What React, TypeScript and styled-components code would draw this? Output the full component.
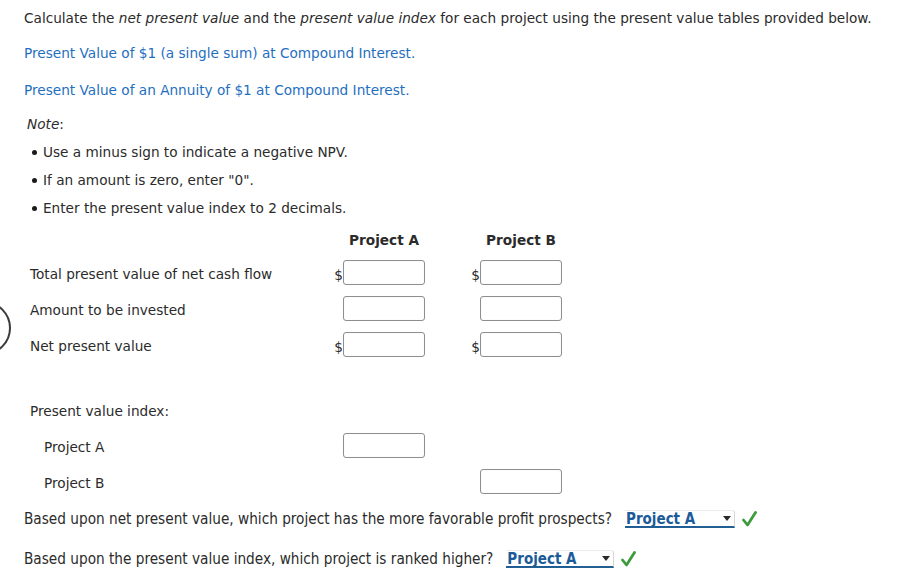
import React from "react";
import styled, { createGlobalStyle } from "styled-components";

const Global = createGlobalStyle`
  html, body { margin: 0; padding: 0; background: #fff; }
  body { font-family: Verdana, "DejaVu Sans", sans-serif; font-size: 13.65px; color: #2b2b2b; }
`;

const Page = styled.div`
  position: relative;
  width: 907px;
  height: 584px;
  overflow: hidden;
  padding: 8px 0 0 24px;
  box-sizing: border-box;
`;

const Para = styled.p<{ $mt?: number; $indent?: number }>`
  margin: ${(p) => p.$mt ?? 0}px 0 0 ${(p) => p.$indent ?? 0}px;
  line-height: 20px;
  white-space: nowrap;
`;

const LinkText = styled.a`
  color: #1f6fbf;
  text-decoration: none;
  cursor: pointer;
`;

const Bullets = styled.ul`
  margin: 8px 0 0 0;
  padding: 0 0 0 19px;
  list-style: none;
  display: flex;
  flex-direction: column;
  gap: 8px;
`;

const Bullet = styled.li`
  position: relative;
  line-height: 20px;
  &::before {
    content: "";
    position: absolute;
    left: -11px;
    top: 8px;
    width: 5px;
    height: 5px;
    border-radius: 50%;
    background: #1a1a1a;
  }
`;

const Table = styled.div`
  display: grid;
  grid-template-columns: 303px 137px 92px;
  row-gap: 11px;
  margin: 12px 0 0 6px;
  align-items: center;
`;

const HeadCell = styled.div`
  font-weight: bold;
  line-height: 20px;
  padding-left: 10px;
  width: 82px;
  text-align: center;
  margin-bottom: -1px;
`;

const Label = styled.div<{ $indent?: number }>`
  line-height: 20px;
  padding-left: ${(p) => p.$indent ?? 0}px;
  white-space: nowrap;
  margin-top: 2px;
`;

const Cell = styled.div`
  display: flex;
  align-items: center;
  height: 25px;
`;

const Dollar = styled.span<{ $show?: boolean }>`
  width: 10px;
  text-align: right;
  padding-right: 0px;
  box-sizing: border-box;
  visibility: ${(p) => (p.$show ? "visible" : "hidden")};
  line-height: 20px;
  margin-top: 4px;
`;

const Input = styled.input`
  width: 82px;
  height: 25px;
  box-sizing: border-box;
  border: 1px solid #8e8e8e;
  border-radius: 3px;
  box-shadow: inset 0 0 1px rgba(0, 0, 0, 0.15);
  background: #fff;
  padding: 0 4px;
  font: inherit;
  outline: none;
`;

const Section = styled.div`
  margin: 44px 0 0 6px;
  line-height: 20px;
`;

const Table2 = styled(Table)`
  margin-top: 12px;
`;

const Question = styled.div<{ $mt: number }>`
  margin-top: ${(p) => p.$mt}px;
  display: flex;
  align-items: center;
  font-family: "DejaVu Sans Condensed", "DejaVu Sans", sans-serif;
  font-stretch: condensed;
  font-size: 15.2px;
  line-height: 20px;
  white-space: nowrap;
`;

const SelectBox = styled.div<{ $w: number }>`
  position: relative;
  margin-left: 13px;
  width: ${(p) => p.$w}px;
  height: 18px;
  box-sizing: border-box;
  border-bottom: 2px solid #225f92;
  border-right: 1px solid #d6d6d6;
  border-top: 1px solid #ececec;
  border-radius: 0 3px 0 0;
  font-weight: bold;
  color: #1c5b97;
  font-size: 15px;
  line-height: 16px;
  padding-left: 1px;
  text-decoration: underline;
  text-decoration-thickness: 1px;
  text-underline-offset: 2px;
`;

const Caret = styled.span`
  position: absolute;
  right: 3px;
  top: 5px;
  width: 0;
  height: 0;
  border-left: 4px solid transparent;
  border-right: 4px solid transparent;
  border-top: 5px solid #2a2a2a;
`;

const Check = styled.svg`
  margin-left: 7px;
  width: 15px;
  height: 16px;
`;

const SideArc = styled.div`
  position: absolute;
  left: -43px;
  top: 301px;
  width: 50px;
  height: 50px;
  border: 2px solid #3a3a3a;
  border-radius: 50%;
`;

function CheckMark() {
  return (
    <Check viewBox="0 0 15 16">
      <path d="M1.5 9 L5.5 14 L13.5 1.5" stroke="#3d9b3d" strokeWidth="2.8" fill="none" strokeLinecap="round" strokeLinejoin="round" />
    </Check>
  );
}

function Select({ value, width }: { value: string; width: number }) {
  return (
    <SelectBox $w={width}>
      {value}
      <Caret />
    </SelectBox>
  );
}

const rows = [
  { label: "Total present value of net cash flow", dollar: true },
  { label: "Amount to be invested", dollar: false },
  { label: "Net present value", dollar: true },
];

export default function App() {
  return (
    <>
      <Global />
      <Page>
        <SideArc />
        <Para>
          Calculate the <i>net present value</i> and the <i>present value index</i> for each project using the present value tables provided below.
        </Para>
        <Para $mt={15}>
          <LinkText>Present Value of $1 (a single sum) at Compound Interest.</LinkText>
        </Para>
        <Para $mt={17}>
          <LinkText>Present Value of an Annuity of $1 at Compound Interest.</LinkText>
        </Para>
        <Para $mt={14} $indent={3}>
          <i>Note</i>:
        </Para>
        <Bullets>
          <Bullet>Use a minus sign to indicate a negative NPV.</Bullet>
          <Bullet>If an amount is zero, enter "0".</Bullet>
          <Bullet>Enter the present value index to 2 decimals.</Bullet>
        </Bullets>
        <Table>
          <div />
          <HeadCell>Project A</HeadCell>
          <HeadCell>Project B</HeadCell>
          {rows.map((r) => (
            <React.Fragment key={r.label}>
              <Label>{r.label}</Label>
              <Cell>
                <Dollar $show={r.dollar}>$</Dollar>
                <Input />
              </Cell>
              <Cell>
                <Dollar $show={r.dollar}>$</Dollar>
                <Input />
              </Cell>
            </React.Fragment>
          ))}
        </Table>
        <Section>Present value index:</Section>
        <Table2>
          <Label $indent={14}>Project A</Label>
          <Cell>
            <Dollar />
            <Input />
          </Cell>
          <div />
          <Label $indent={14}>Project B</Label>
          <div />
          <Cell>
            <Dollar />
            <Input />
          </Cell>
        </Table2>
        <Question $mt={15}>
          Based upon net present value, which project has the more favorable profit prospects?
          <Select value="Project A" width={110} />
          <CheckMark />
        </Question>
        <Question $mt={20}>
          Based upon the present value index, which project is ranked higher?
          <Select value="Project A" width={108} />
          <CheckMark />
        </Question>
      </Page>
    </>
  );
}
